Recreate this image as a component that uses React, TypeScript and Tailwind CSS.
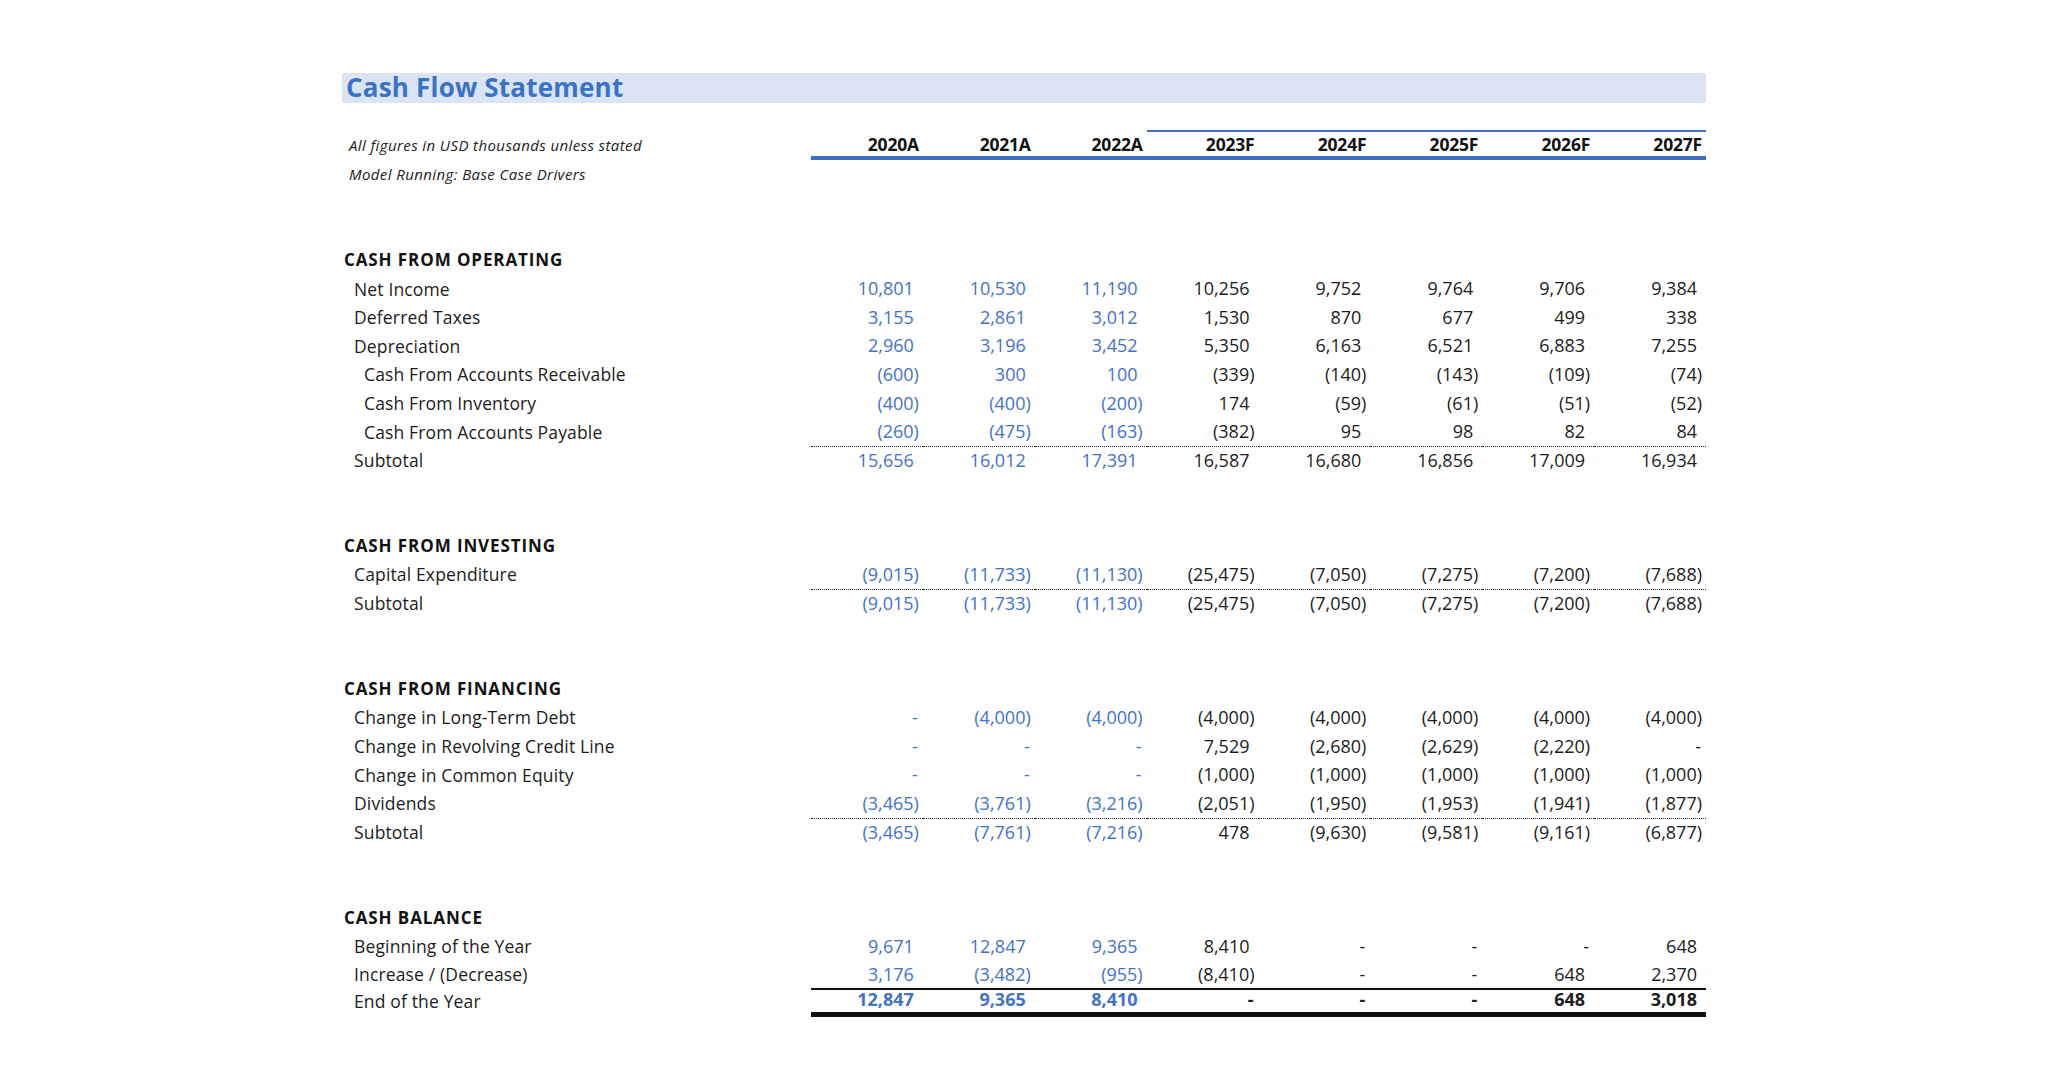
import React from 'react';

type Row = {
  label: string;
  kind: 'header' | 'item' | 'sub' | 'blank' | 'note' | 'end';
  indent?: number;
  values?: string[];
  line?: 'hair';
};

const BLUE = 'text-[#4472c4]';

const rows: Row[] = [
  { label: 'Model Running: Base Case Drivers', kind: 'note' },
  { label: '', kind: 'blank' },
  { label: '', kind: 'blank' },
  { label: 'CASH FROM OPERATING', kind: 'header' },
  { label: 'Net Income', kind: 'item', indent: 1, values: ['10,801', '10,530', '11,190', '10,256', '9,752', '9,764', '9,706', '9,384'] },
  { label: 'Deferred Taxes', kind: 'item', indent: 1, values: ['3,155', '2,861', '3,012', '1,530', '870', '677', '499', '338'] },
  { label: 'Depreciation', kind: 'item', indent: 1, values: ['2,960', '3,196', '3,452', '5,350', '6,163', '6,521', '6,883', '7,255'] },
  { label: 'Cash From Accounts Receivable', kind: 'item', indent: 2, values: ['(600)', '300', '100', '(339)', '(140)', '(143)', '(109)', '(74)'] },
  { label: 'Cash From Inventory', kind: 'item', indent: 2, values: ['(400)', '(400)', '(200)', '174', '(59)', '(61)', '(51)', '(52)'] },
  { label: 'Cash From Accounts Payable', kind: 'item', indent: 2, values: ['(260)', '(475)', '(163)', '(382)', '95', '98', '82', '84'] },
  { label: 'Subtotal', kind: 'sub', indent: 1, line: 'hair', values: ['15,656', '16,012', '17,391', '16,587', '16,680', '16,856', '17,009', '16,934'] },
  { label: '', kind: 'blank' },
  { label: '', kind: 'blank' },
  { label: 'CASH FROM INVESTING', kind: 'header' },
  { label: 'Capital Expenditure', kind: 'item', indent: 1, values: ['(9,015)', '(11,733)', '(11,130)', '(25,475)', '(7,050)', '(7,275)', '(7,200)', '(7,688)'] },
  { label: 'Subtotal', kind: 'sub', indent: 1, line: 'hair', values: ['(9,015)', '(11,733)', '(11,130)', '(25,475)', '(7,050)', '(7,275)', '(7,200)', '(7,688)'] },
  { label: '', kind: 'blank' },
  { label: '', kind: 'blank' },
  { label: 'CASH FROM FINANCING', kind: 'header' },
  { label: 'Change in Long-Term Debt', kind: 'item', indent: 1, values: ['-', '(4,000)', '(4,000)', '(4,000)', '(4,000)', '(4,000)', '(4,000)', '(4,000)'] },
  { label: 'Change in Revolving Credit Line', kind: 'item', indent: 1, values: ['-', '-', '-', '7,529', '(2,680)', '(2,629)', '(2,220)', '-'] },
  { label: 'Change in Common Equity', kind: 'item', indent: 1, values: ['-', '-', '-', '(1,000)', '(1,000)', '(1,000)', '(1,000)', '(1,000)'] },
  { label: 'Dividends', kind: 'item', indent: 1, values: ['(3,465)', '(3,761)', '(3,216)', '(2,051)', '(1,950)', '(1,953)', '(1,941)', '(1,877)'] },
  { label: 'Subtotal', kind: 'sub', indent: 1, line: 'hair', values: ['(3,465)', '(7,761)', '(7,216)', '478', '(9,630)', '(9,581)', '(9,161)', '(6,877)'] },
  { label: '', kind: 'blank' },
  { label: '', kind: 'blank' },
  { label: 'CASH BALANCE', kind: 'header' },
  { label: 'Beginning of the Year', kind: 'item', indent: 1, values: ['9,671', '12,847', '9,365', '8,410', '-', '-', '-', '648'] },
  { label: 'Increase / (Decrease)', kind: 'item', indent: 1, values: ['3,176', '(3,482)', '(955)', '(8,410)', '-', '-', '648', '2,370'] },
  { label: 'End of the Year', kind: 'end', indent: 1, values: ['12,847', '9,365', '8,410', '-', '-', '-', '648', '3,018'] },
];

const years = ['2020A', '2021A', '2022A', '2023F', '2024F', '2025F', '2026F', '2027F'];

const Num = ({ v }: { v: string }) => {
  // accounting format: positives leave room for the closing paren
  if (v === '-') return <span className="pr-[1px]">-</span>;
  if (v.startsWith('(')) return <span>{v}</span>;
  return (
    <span>
      {v}
      <span className="inline-block w-[5px]" />
    </span>
  );
};

const App = () => {
  return (
    <div className="min-h-screen bg-white pl-[342px] pt-[73px] font-['Open_Sans',_'Liberation_Sans',_sans-serif] text-[#1c1c1c]">
      <div className="w-[1364px]">
        <div className="h-[30px] bg-[#dae4f4] flex items-center pl-[4px] pb-[3px]">
          <span className="text-[26px] font-bold text-[#3a72c6] leading-none tracking-[0.2px]">
            Cash Flow Statement
          </span>
        </div>

        <div className="h-[27px]" />

        <div className="grid grid-cols-[469px_repeat(8,minmax(0,1fr))]">
          <div className="h-[30px] flex items-center pl-[7px] pt-[1px] italic text-[15px] tracking-[0.4px] text-[#222]">
            All figures in USD thousands unless stated
          </div>
          {years.map((y, i) => (
            <div
              key={y}
              className={`h-[30px] flex items-center justify-end pr-[4px] font-bold text-[17.5px] tracking-[-0.2px] text-[#111] border-b-4 border-[#3f6fc4] ${
                i >= 3 ? 'border-t-2' : 'pt-[2px]'
              }`}
            >
              {y}
            </div>
          ))}

          {rows.map((r, ri) => {
            const isEnd = r.kind === 'end';
            const isPrevEnd = rows[ri + 1]?.kind === 'end';
            const h = isEnd ? 'h-[29px] pb-[3px]' : isPrevEnd ? 'h-[27px]' : 'h-[28.6px]';
            const pad =
              r.indent === 2 ? 'pl-[22px]' : r.indent === 1 ? 'pl-[12px]' : r.kind === 'note' ? 'pl-[7px]' : 'pl-[2px]';
            const labelCls =
              r.kind === 'header'
                ? 'font-bold text-[17px] tracking-[0.9px] text-[#111]'
                : r.kind === 'note'
                ? 'italic text-[15px] tracking-[0.4px] text-[#222]'
                : 'text-[17.5px] tracking-[0.15px]';
            return (
              <React.Fragment key={ri}>
                <div className={`${h} flex items-center ${pad} ${labelCls} whitespace-nowrap`}>{r.label}</div>
                {Array.from({ length: 8 }).map((_, ci) => {
                  const v = r.values?.[ci];
                  const border = isEnd
                    ? 'border-t-2 border-b-[5px] border-[#111]'
                    : r.line === 'hair'
                    ? 'border-t border-dotted border-[#222]'
                    : '';
                  return (
                    <div
                      key={ci}
                      className={`${h} flex items-center justify-end pr-[4px] text-[18px] ${border} ${
                        ci < 3 ? BLUE : 'text-[#1c1c1c]'
                      } ${isEnd ? 'font-bold' : ''}`}
                    >
                      {v && <Num v={v} />}
                    </div>
                  );
                })}
              </React.Fragment>
            );
          })}
        </div>
      </div>
    </div>
  );
};

export default App;
